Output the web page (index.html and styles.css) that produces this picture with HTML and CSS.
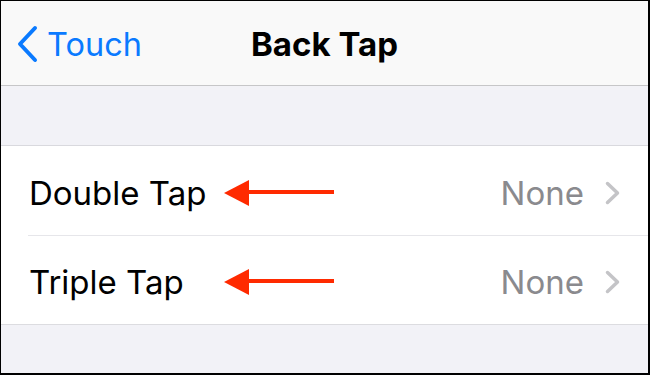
FILE: index.html
```html
<!DOCTYPE html>
<html>
<head>
<meta charset="utf-8">
<link rel="stylesheet" href="styles.css">
</head>
<body>
<div class="screen">
  <header class="nav">
    <div class="back">
      <svg class="back-chevron" width="22" height="38" viewBox="0 0 22 38"><path d="M19 3 L4 19 L19 35" fill="none" stroke="#0a7aff" stroke-width="4" stroke-linecap="round" stroke-linejoin="round"/></svg>
      <span class="back-label">Touch</span>
    </div>
    <div class="title">Back Tap</div>
    <div class="spacer"></div>
  </header>
  <div class="gap"></div>
  <ul class="list">
    <li class="row">
      <span class="label">Double Tap</span>
      <svg class="arrow" width="110" height="26" viewBox="0 0 110 26"><polygon points="0,13 25,0 25,26" fill="#ff2a00"/><rect x="24" y="10" width="86" height="4" fill="#ff2a00"/></svg>
      <span class="value">None</span>
      <svg class="chev" width="15" height="24" viewBox="0 0 15 24"><path d="M2.5 2.5 L12.5 12 L2.5 21.5" fill="none" stroke="#c4c4c7" stroke-width="3.5" stroke-linecap="round" stroke-linejoin="round"/></svg>
    </li>
    <li class="row">
      <span class="label">Triple Tap</span>
      <svg class="arrow" width="110" height="26" viewBox="0 0 110 26"><polygon points="0,13 25,0 25,26" fill="#ff2a00"/><rect x="24" y="10" width="86" height="4" fill="#ff2a00"/></svg>
      <span class="value">None</span>
      <svg class="chev" width="15" height="24" viewBox="0 0 15 24"><path d="M2.5 2.5 L12.5 12 L2.5 21.5" fill="none" stroke="#c4c4c7" stroke-width="3.5" stroke-linecap="round" stroke-linejoin="round"/></svg>
    </li>
  </ul>
</div>
</body>
</html>
```

FILE: styles.css
```css
* { box-sizing: border-box; }
html, body { margin: 0; padding: 0; }
body { font-family: "Inter", "Liberation Sans", sans-serif; }

.screen {
  width: 650px;
  height: 375px;
  background: #f2f2f7;
  border-style: solid;
  border-color: #000;
  border-width: 1px 2px 2px 1px;
  overflow: hidden;
}

.nav {
  height: 85px;
  background: #f9f9f9;
  border-bottom: 1px solid #c6c6c8;
  display: grid;
  grid-template-columns: 1fr auto 1fr;
  align-items: center;
  padding-top: 2px;
}

.back {
  display: flex;
  align-items: center;
  padding-left: 15px;
  gap: 9px;
  color: #0a7aff;
  font-size: 32.5px;
}

.back-chevron { display: block; }

.title {
  font-size: 33px;
  font-weight: 700;
  color: #000;
}

.gap { height: 59px; }

.list {
  list-style: none;
  margin: 0;
  padding: 0;
  background: #fff;
  border-top: 1px solid #d9d9de;
  border-bottom: 1px solid #dcdce0;
}

.row {
  height: 89px;
  display: grid;
  grid-template-columns: 195px 110px 1fr auto;
  align-items: center;
  padding-left: 28px;
  padding-right: 28px;
  padding-top: 4px;
}

.row + .row { border-top: 1px solid #e6e6ea; margin-left: 27px; padding-left: 1px; height: 89px; }

.label {
  font-size: 33px;
  color: #000;
}

.arrow { display: block; }

.value {
  font-size: 33px;
  color: #8a8a8e;
  justify-self: end;
  margin-right: 21px;
}

.chev { display: block; }
```
